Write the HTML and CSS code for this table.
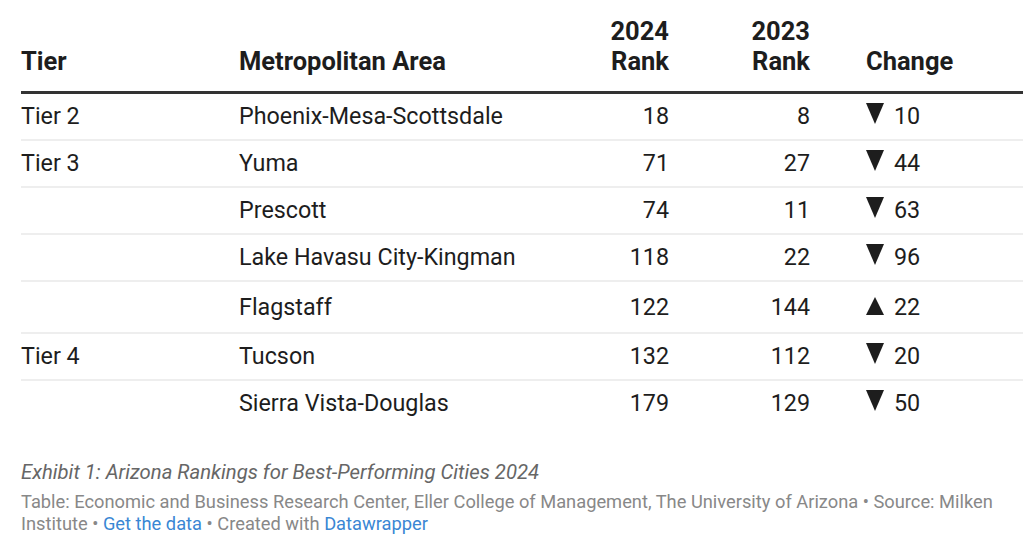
FILE: index.html
```html
<!DOCTYPE html>
<html lang="en">
<head>
<meta charset="utf-8">
<title>Arizona Rankings</title>
<link rel="stylesheet" href="styles.css">
</head>
<body>
<div class="chart">
  <table class="rank-table">
    <colgroup>
      <col class="c-tier">
      <col class="c-metro">
      <col class="c-r24">
      <col class="c-r23">
      <col class="c-change">
    </colgroup>
    <thead>
      <tr>
        <th class="left">Tier</th>
        <th class="left">Metropolitan Area</th>
        <th class="num">2024<br>Rank</th>
        <th class="num">2023<br>Rank</th>
        <th class="left chg">Change</th>
      </tr>
    </thead>
    <tbody>
      <tr>
        <td>Tier 2</td><td>Phoenix-Mesa-Scottsdale</td><td class="num">18</td><td class="num">8</td>
        <td class="chg"><span class="tri down"><svg viewBox="0 0 18 21" width="18" height="21"><path d="M0 0H18L9 21Z"/></svg></span>10</td>
      </tr>
      <tr>
        <td>Tier 3</td><td>Yuma</td><td class="num">71</td><td class="num">27</td>
        <td class="chg"><span class="tri down"><svg viewBox="0 0 18 21" width="18" height="21"><path d="M0 0H18L9 21Z"/></svg></span>44</td>
      </tr>
      <tr>
        <td></td><td>Prescott</td><td class="num">74</td><td class="num">11</td>
        <td class="chg"><span class="tri down"><svg viewBox="0 0 18 21" width="18" height="21"><path d="M0 0H18L9 21Z"/></svg></span>63</td>
      </tr>
      <tr>
        <td></td><td>Lake Havasu City-Kingman</td><td class="num">118</td><td class="num">22</td>
        <td class="chg"><span class="tri down"><svg viewBox="0 0 18 21" width="18" height="21"><path d="M0 0H18L9 21Z"/></svg></span>96</td>
      </tr>
      <tr class="tall">
        <td></td><td>Flagstaff</td><td class="num">122</td><td class="num">144</td>
        <td class="chg"><span class="tri up"><svg viewBox="0 0 18 18" width="18" height="18"><path d="M9 0L18 18H0Z"/></svg></span>22</td>
      </tr>
      <tr>
        <td>Tier 4</td><td>Tucson</td><td class="num">132</td><td class="num">112</td>
        <td class="chg"><span class="tri down"><svg viewBox="0 0 18 21" width="18" height="21"><path d="M0 0H18L9 21Z"/></svg></span>20</td>
      </tr>
      <tr class="last">
        <td></td><td>Sierra Vista-Douglas</td><td class="num">179</td><td class="num">129</td>
        <td class="chg"><span class="tri down"><svg viewBox="0 0 18 21" width="18" height="21"><path d="M0 0H18L9 21Z"/></svg></span>50</td>
      </tr>
    </tbody>
  </table>
  <div class="footer">
    <p class="caption">Exhibit 1: Arizona Rankings for Best-Performing Cities 2024</p>
    <p class="notes"><span class="line">Table: Economic and Business Research Center, Eller College of Management, The University of Arizona • Source: Milken</span><span class="line">Institute • <a href="#">Get the data</a> • Created with <a href="#">Datawrapper</a></span></p>
  </div>
</div>
</body>
</html>
```

FILE: styles.css
```css
html, body {
  margin: 0;
  padding: 0;
  background: #ffffff;
}
body {
  font-family: Roboto, "Liberation Sans", Arial, sans-serif;
  color: #1d1d1d;
}
.chart {
  padding: 16px 1px 0 21px;
}
.rank-table {
  width: 1002px;
  border-collapse: collapse;
  table-layout: fixed;
  font-size: 23.3px;
}
.c-tier { width: 218px; }
.c-metro { width: 350px; }
.c-r24 { width: 80px; }
.c-r23 { width: 141px; }
.c-change { width: 213px; }

.rank-table th {
  font-size: 25.5px;
  font-weight: 700;
  line-height: 30px;
  padding: 0 0 15px 0;
  vertical-align: bottom;
  border-bottom: 3px solid #333333;
}
.rank-table td {
  height: 45px;
  padding: 0;
  line-height: 27px;
  vertical-align: middle;
  border-bottom: 2px solid #eeeeee;
  white-space: nowrap;
}
.rank-table tr.tall td { height: 50px; }
.rank-table tr.last td { border-bottom: none; }
.left { text-align: left; }
.num { text-align: right; }
.rank-table th.chg, .rank-table td.chg {
  padding-left: 56px;
  text-align: left;
}
.tri {
  display: inline-block;
  width: 18px;
  margin-right: 10px;
  vertical-align: baseline;
}
.tri svg {
  display: block;
  fill: #1d1d1d;
}
.footer {
  padding-top: 34px;
}
.caption {
  margin: 0;
  font-size: 20.3px;
  font-style: italic;
  color: #666666;
  line-height: 24px;
}
.notes {
  margin: 7px 0 0 0;
  font-size: 18.3px;
  line-height: 21.5px;
  color: #888888;
}
.notes .line {
  display: block;
  white-space: nowrap;
}
.notes a {
  color: #3a87d4;
  text-decoration: none;
}
```
